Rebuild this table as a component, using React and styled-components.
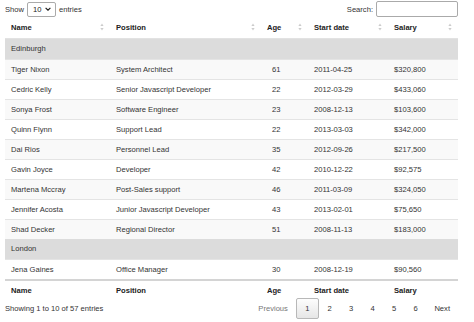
import styled, { createGlobalStyle } from 'styled-components';

const GlobalStyle = createGlobalStyle`
  body {
    margin: 0;
    background: #fff;
    font-family: 'Liberation Sans', Arial, sans-serif;
    color: #333;
  }
`;

const columns = [
  { key: 'name', title: 'Name', width: 105 },
  { key: 'position', title: 'Position', width: 151 },
  { key: 'age', title: 'Age', width: 47, bodyPad: 11 },
  { key: 'date', title: 'Start date', width: 80 },
  { key: 'salary', title: 'Salary', width: 70 },
];

const groups = [
  {
    office: 'Edinburgh',
    rows: [
      ['Tiger Nixon', 'System Architect', '61', '2011-04-25', '$320,800'],
      ['Cedric Kelly', 'Senior Javascript Developer', '22', '2012-03-29', '$433,060'],
      ['Sonya Frost', 'Software Engineer', '23', '2008-12-13', '$103,600'],
      ['Quinn Flynn', 'Support Lead', '22', '2013-03-03', '$342,000'],
      ['Dai Rios', 'Personnel Lead', '35', '2012-09-26', '$217,500'],
      ['Gavin Joyce', 'Developer', '42', '2010-12-22', '$92,575'],
      ['Martena Mccray', 'Post-Sales support', '46', '2011-03-09', '$324,050'],
      ['Jennifer Acosta', 'Junior Javascript Developer', '43', '2013-02-01', '$75,650'],
      ['Shad Decker', 'Regional Director', '51', '2008-11-13', '$183,000'],
    ],
  },
  {
    office: 'London',
    rows: [['Jena Gaines', 'Office Manager', '30', '2008-12-19', '$90,560']],
  },
];

const pages = ['1', '2', '3', '4', '5', '6'];

const Wrapper = styled.div`
  width: 453px;
  padding: 0 0 0 5px;
  font-size: 7.6px;
`;

const Controls = styled.div`
  display: flex;
  justify-content: space-between;
  align-items: center;
  height: 17px;
  padding-top: 1px;
  box-sizing: border-box;
`;

const Label = styled.label`
  display: flex;
  align-items: center;
  gap: 3px;
`;

const Select = styled.div`
  width: 29px;
  height: 15px;
  box-sizing: border-box;
  border: 1px solid #aaa;
  border-radius: 2px;
  display: flex;
  align-items: center;
  justify-content: space-between;
  padding: 0 4px 0 5px;
  color: #222;
  font-size: 7.6px;
`;

const SearchBox = styled.div`
  width: 82px;
  height: 16px;
  box-sizing: border-box;
  border: 1px solid #aaa;
  border-radius: 2px;
  background: #fff;
`;

const Table = styled.table`
  width: 453px;
  border-collapse: collapse;
  table-layout: fixed;
`;

const Head = styled.th`
  height: ${({ $foot }) => ($foot ? 20 : 21)}px;
  padding: 0 6px;
  text-align: left;
  font-weight: bold;
  color: #222;
  box-sizing: border-box;
  border-${({ $foot }) => ($foot ? 'top: 2px solid #d4d4d4' : 'bottom: 1px solid #e2e2e2')};
`;

const HeadInner = styled.div`
  display: flex;
  align-items: center;
  justify-content: space-between;
`;

const GroupCell = styled.td`
  height: 20px;
  padding: 0 6px;
  background: #dcdcdc;
  color: #333;
`;

const Row = styled.tr`
  background: ${({ $odd }) => ($odd ? '#f9f9f9' : '#fff')};
`;

const Cell = styled.td`
  height: 19px;
  padding: 0 6px 0 ${({ $pad }) => $pad || 6}px;
  border-top: 1px solid #e4e4e4;
  white-space: nowrap;
  overflow: hidden;
  color: #333;
`;

const Bottom = styled.div`
  display: flex;
  justify-content: space-between;
  align-items: center;
  height: 22px;
  margin-top: -2px;
`;

const Pager = styled.div`
  display: flex;
  align-items: center;
`;

const PageButton = styled.span`
  box-sizing: border-box;
  height: 21px;
  min-width: ${({ $active }) => ($active ? 23 : 21.5)}px;
  padding: 0 ${({ $wide }) => $wide || 0}px;
  display: flex;
  align-items: center;
  justify-content: center;
  color: ${({ $muted }) => ($muted ? '#777' : '#333')};
  border: 1px solid ${({ $active }) => ($active ? '#b8b8b8' : 'transparent')};
  border-radius: 2px;
  background: ${({ $active }) =>
    $active ? 'linear-gradient(to bottom, #fdfdfd 0%, #e6e6e6 100%)' : 'transparent'};
  margin-left: ${({ $active }) => ($active ? 4 : 0)}px;
`;

const SortIcon = () => (
  <svg width="4" height="8" viewBox="0 0 4 8">
    <path d="M2 0.5 L3.6 3 L0.4 3 Z" fill="#ccc" />
    <path d="M2 7.5 L3.6 5 L0.4 5 Z" fill="#ccc" />
  </svg>
);

const Chevron = () => (
  <svg width="6" height="4" viewBox="0 0 6 4">
    <path d="M0.6 0.8 L3 3.2 L5.4 0.8" stroke="#222" strokeWidth="1.2" fill="none" />
  </svg>
);

const App = () => {
  let index = 0;

  return (
    <>
      <GlobalStyle />
      <Wrapper>
        <Controls>
          <Label>
            Show
            <Select>
              10
              <Chevron />
            </Select>
            entries
          </Label>
          <Label>
            Search:
            <SearchBox />
          </Label>
        </Controls>
        <Table>
          <colgroup>
            {columns.map(col => (
              <col key={col.key} style={{ width: col.width }} />
            ))}
          </colgroup>
          <thead>
            <tr>
              {columns.map(col => (
                <Head key={col.key}>
                  <HeadInner>
                    {col.title}
                    <SortIcon />
                  </HeadInner>
                </Head>
              ))}
            </tr>
          </thead>
          <tbody>
            {groups.map(group => [
              <tr key={group.office}>
                <GroupCell colSpan={5}>{group.office}</GroupCell>
              </tr>,
              ...group.rows.map(row => {
                index += 1;
                return (
                  <Row key={row[0]} $odd={index % 2 === 1}>
                    {row.map((value, i) => (
                      <Cell key={i} $pad={columns[i].bodyPad}>
                        {value}
                      </Cell>
                    ))}
                  </Row>
                );
              }),
            ])}
          </tbody>
          <tfoot>
            <tr>
              {columns.map(col => (
                <Head key={col.key} $foot>
                  {col.title}
                </Head>
              ))}
            </tr>
          </tfoot>
        </Table>
        <Bottom>
          <span>Showing 1 to 10 of 57 entries</span>
          <Pager>
            <PageButton $wide={3} $muted>Previous</PageButton>
            {pages.map((page, i) => (
              <PageButton key={page} $active={i === 0}>
                {page}
              </PageButton>
            ))}
            <PageButton $wide={7}>Next</PageButton>
          </Pager>
        </Bottom>
      </Wrapper>
    </>
  );
};

export default App;
